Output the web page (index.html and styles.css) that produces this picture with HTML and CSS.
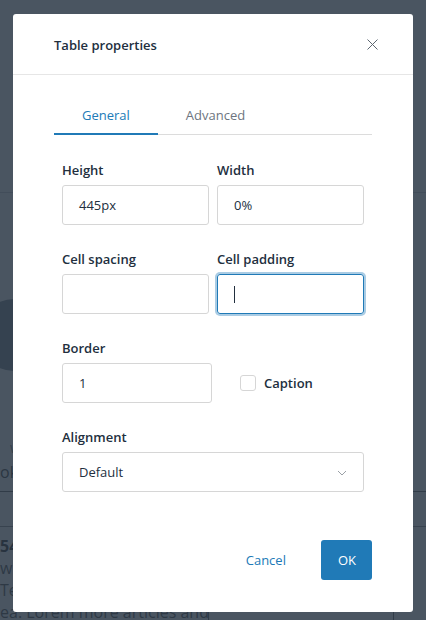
FILE: index.html
```html
<!DOCTYPE html>
<html lang="en">
<head>
<meta charset="utf-8">
<title>Table properties</title>
<link rel="stylesheet" href="styles.css">
</head>
<body>
<div class="page">
  <div class="topbar"></div>
  <div class="avatar"></div>
  <p class="meta">written by a writer</p>
  <p class="lead">ok notes of the week</p>
  <div class="rule"></div>
  <table class="bg-table">
    <tr><td><b>5402 words</b><br>when the text reads<br>Tested the Lorem ipsum<br>ea. Lorem more articles and</td><td>Lorem ipsum dolor</td><td>A</td></tr>
  </table>
</div>
<div class="overlay"></div>
<div class="dialog" role="dialog">
  <div class="dialog-header">
    <div class="dialog-title">Table properties</div>
    <svg class="close" width="11" height="11" viewBox="0 0 11 11"><path d="M0.5 0.5 L10.5 10.5 M10.5 0.5 L0.5 10.5" stroke="#5d6670" stroke-width="1" fill="none"/></svg>
  </div>
  <div class="dialog-body">
    <div class="tabs">
      <div class="tab active">General</div>
      <div class="tab">Advanced</div>
    </div>
    <div class="form">
      <div class="field">
        <div class="label">Height</div>
        <div class="input">445px</div>
      </div>
      <div class="field">
        <div class="label">Width</div>
        <div class="input">0%</div>
      </div>
      <div class="field">
        <div class="label">Cell spacing</div>
        <div class="input"></div>
      </div>
      <div class="field">
        <div class="label">Cell padding</div>
        <div class="input focused"><span class="caret"></span></div>
      </div>
      <div class="row-border">
        <div class="field">
          <div class="label">Border</div>
          <div class="input">1</div>
        </div>
        <div class="check">
          <span class="box"></span>
          <span class="check-label">Caption</span>
        </div>
      </div>
      <div class="field wide">
        <div class="label">Alignment</div>
        <div class="input select">
          <span>Default</span>
          <svg class="chev" width="10" height="6" viewBox="0 0 10 6"><path d="M1 1 L5 5 L9 1" stroke="#9aa0a6" stroke-width="1" fill="none"/></svg>
        </div>
      </div>
    </div>
  </div>
  <div class="dialog-footer">
    <button class="btn cancel">Cancel</button>
    <button class="btn ok">OK</button>
  </div>
</div>
</body>
</html>
```
FILE: styles.css
```css
* { box-sizing: border-box; }
html, body { margin: 0; padding: 0; }
body {
  width: 426px;
  height: 620px;
  overflow: hidden;
  position: relative;
  background: #ffffff;
  font-family: "Open Sans", "Liberation Sans", sans-serif;
  color: #222f3e;
}

/* background page */
.page { font-family: "Open Sans", sans-serif; color: #333; height: 620px; overflow: hidden; }
.topbar { height: 193px; border-bottom: 1px solid #cfd3d8; }
.avatar {
  width: 72px; height: 72px; border-radius: 50%;
  background: #8a94a0; margin: 106px 0 0 -22px;
}
.meta { margin: 66px 0 0 0; font-size: 14px; line-height: 22px; color: #888; padding-left: 10px; }
.lead { margin: 2px 0 0 0; font-size: 16px; line-height: 22px; color: #555; padding-left: 0; }
.rule { margin-top: 8px; height: 1px; background: #777; }
.bg-table { margin-top: 34px; border-collapse: collapse; table-layout: fixed; width: 440px; border-top: 1px solid #999; }
.bg-table td { vertical-align: top; font-size: 16px; line-height: 22px; color: #666; border-right: 1px solid #777; padding: 8px 0 0 0; height: 100px; white-space: nowrap; overflow: hidden; }
.bg-table td:first-child { width: 208px; }
.bg-table td:nth-child(2) { width: 185px; }
.bg-table b { color: #444; }

.overlay { position: absolute; inset: 0; background: rgba(34, 47, 62, 0.82); }

/* dialog */
.dialog {
  position: absolute;
  left: 13px; top: 14px;
  width: 400px; height: 598px;
  background: #fff;
  border-radius: 3px;
  display: flex;
  flex-direction: column;
}
.dialog-header {
  height: 61px;
  border-bottom: 1px solid #e6e6e6;
  display: flex;
  align-items: center;
  justify-content: space-between;
  padding: 1px 35px 0 41px;
}
.dialog-title { font-size: 13px; font-weight: 600; color: #222f3e; }
.close { display: block; }

.dialog-body { padding: 0 41px; flex: 1; }
.tabs {
  margin-top: 21px;
  display: flex;
  border-bottom: 1px solid #dcdcdc;
}
.tab {
  font-size: 13px;
  line-height: 35px;
  padding: 2px 28px 0;
  margin-bottom: -1px;
  border-bottom: 2px solid transparent;
  color: #6d7580;
}
.tab.active { color: #207ab7; border-bottom-color: #207ab7; }

.form {
  margin-top: 26px;
  padding: 0 8px;
  display: grid;
  grid-template-columns: 1fr 1fr;
  column-gap: 8px;
  row-gap: 25px;
}
.field { display: flex; flex-direction: column; }
.label { font-size: 13px; font-weight: 600; line-height: 18px; margin-bottom: 6px; color: #222f3e; }
.input {
  height: 40px;
  border: 1px solid #d6d6d6;
  border-radius: 3px;
  padding: 0 16px;
  font-size: 13px;
  display: flex;
  align-items: center;
  color: #222f3e;
}
.input.focused {
  border-color: #207ab7;
  box-shadow: 0 0 0 2px rgba(32, 122, 183, 0.38);
}
.caret { width: 1px; height: 17px; background: #222f3e; }

.row-border {
  grid-column: 1 / 3;
  display: grid;
  grid-template-columns: 150px auto;
  align-items: end;
}
.check { display: flex; align-items: center; height: 40px; padding-left: 28px; }
.box { width: 16px; height: 16px; border: 1px solid #d6d6d6; border-radius: 3px; margin-right: 8px; }
.check-label { font-size: 13px; font-weight: 600; color: #222f3e; }

.field.wide { grid-column: 1 / 3; }
.select { justify-content: space-between; padding-right: 16px; }
.chev { display: block; margin-top: 1px; }

.dialog-footer {
  display: flex;
  justify-content: flex-end;
  align-items: center;
  padding: 0 41px 32px;
}
.btn {
  font-family: "Open Sans", "Liberation Sans", sans-serif;
  font-size: 13px;
  height: 40px;
  border: 0;
  border-radius: 3px;
  padding: 0 16px;
  cursor: pointer;
}
.cancel { background: transparent; color: #207ab7; margin-right: 18px; padding: 0 17px 0 16px; }
.ok { background: #207ab7; color: #fff; padding: 0 16px 0 17px; }
```
